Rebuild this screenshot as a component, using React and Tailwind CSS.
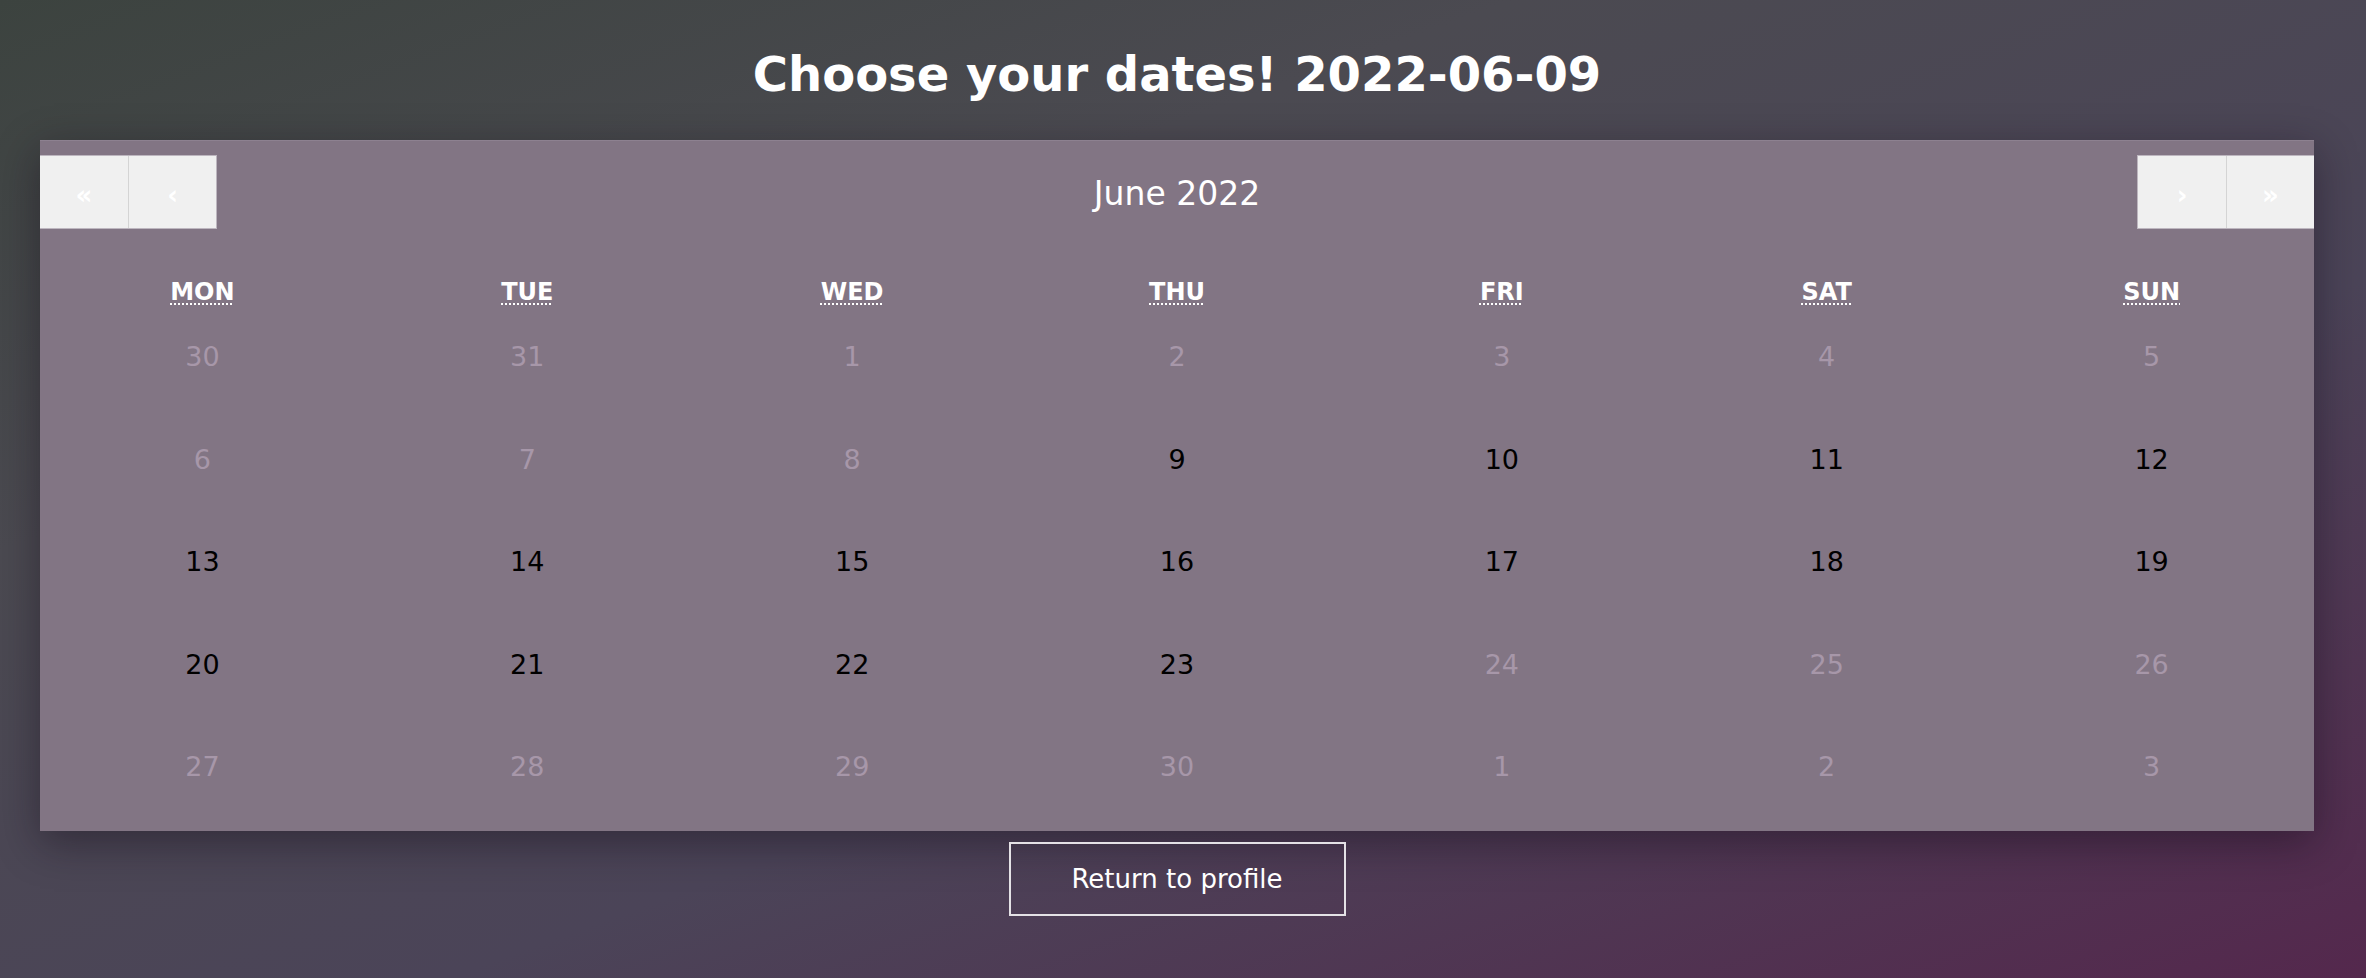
import React from 'react';

// June 2022 grid, Monday first — leading/trailing days come from May and July
const WEEKDAYS = ['MON', 'TUE', 'WED', 'THU', 'FRI', 'SAT', 'SUN'];

const ACTIVE_FROM = 9;
const ACTIVE_TO = 23;

function buildDays() {
  const days = [];
  days.push({ n: 30, cur: false }, { n: 31, cur: false });
  for (let d = 1; d <= 30; d++) days.push({ n: d, cur: true });
  for (let d = 1; d <= 3; d++) days.push({ n: d, cur: false });
  return days.map(day => ({
    ...day,
    enabled: day.cur && day.n >= ACTIVE_FROM && day.n <= ACTIVE_TO,
  }));
}

function NavButton({ children, first }) {
  return (
    <button
      className={
        'w-[88px] h-[72px] flex items-center justify-center pt-[6px] bg-[#f0f0f0] text-white text-[26px] font-bold leading-none ' +
        (first ? '' : 'border-l border-[#d4d4d4]')
      }
    >
      {children}
    </button>
  );
}

export default function App() {
  const days = buildDays();

  return (
    <div
      className="w-[2366px] h-[978px] overflow-hidden bg-[linear-gradient(160deg,#3c433f_0%,#4b4a51_30%,#4b4458_62%,#54284d_100%)]"
      style={{ fontFamily: '"DejaVu Sans", Verdana, sans-serif' }}
    >
      <div className="w-[2274px] ml-[40px] flex flex-col items-center">
        <h1 className="pt-[46px] mb-[38px] text-[48px] leading-[56px] font-bold text-white">
          Choose your dates! 2022-06-09
        </h1>

        {/* Calendar */}
        <div className="w-full h-[691px] bg-[#827584] border-t border-[#8d8190] shadow-[0_12px_40px_rgba(20,10,25,0.45)]">
          <div className="mt-[15px] h-[72px] flex items-center justify-between">
            <div className="flex border border-l-0 border-[#bdb6bf]">
              <NavButton first>«</NavButton>
              <NavButton>‹</NavButton>
            </div>
            <span className="text-white text-[33px] leading-none pt-[2px]">June 2022</span>
            <div className="flex border border-r-0 border-[#bdb6bf]">
              <NavButton first>›</NavButton>
              <NavButton>»</NavButton>
            </div>
          </div>

          <div className="mt-[50px] grid grid-cols-7 h-[28px]">
            {WEEKDAYS.map(w => (
              <div key={w} className="flex justify-center">
                <abbr
                  title={w}
                  className="text-white text-[24px] leading-[28px] font-bold underline decoration-dotted decoration-2 underline-offset-[3px]"
                >
                  {w}
                </abbr>
              </div>
            ))}
          </div>

          <div className="grid grid-cols-7 auto-rows-[102.6px]">
            {days.map((d, i) => (
              <div
                key={i}
                className={
                  'flex items-center justify-center text-[27px] ' +
                  (d.enabled ? 'text-black' : 'text-[#a797a9]')
                }
              >
                {d.n}
              </div>
            ))}
          </div>
        </div>

        <button className="mt-[11px] w-[337px] h-[74px] border-2 border-[#e4e2e6] text-white text-[26px] flex items-center justify-center">
          Return to profile
        </button>
      </div>
    </div>
  );
}
